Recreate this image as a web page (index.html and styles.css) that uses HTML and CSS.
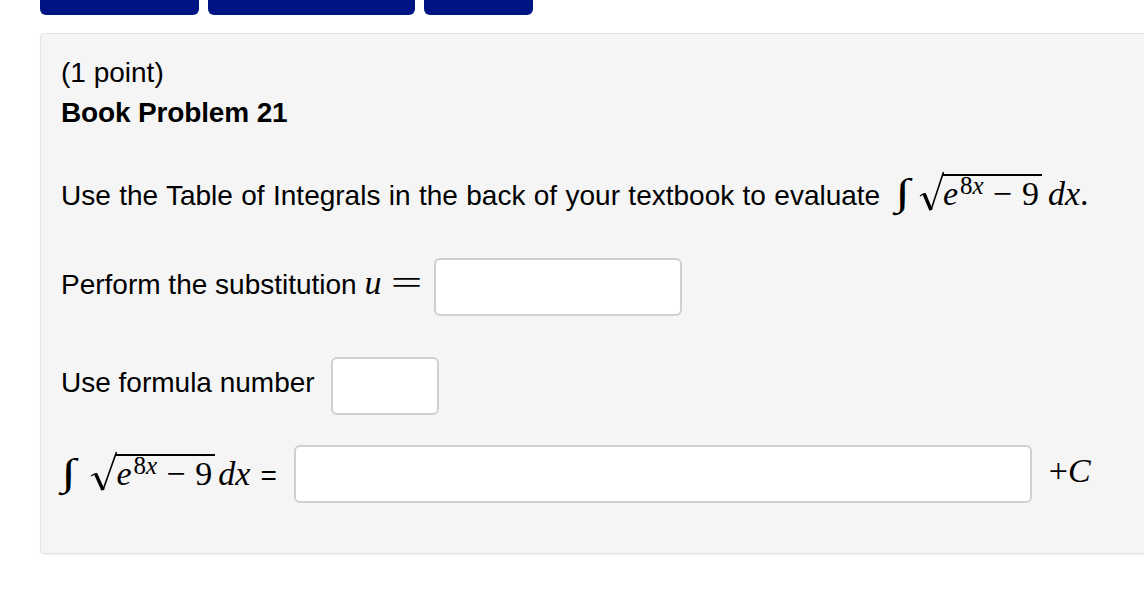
FILE: index.html
```html
<!DOCTYPE html>
<html lang="en">
<head>
  <meta charset="UTF-8" />
  <meta name="viewport" content="width=device-width, initial-scale=1" />
  <title>Book Problem 21</title>
  <link rel="stylesheet" href="styles.css">
</head>
<body>

  <div class="nav-buttons">
    <button class="nav-btn btn-a"></button>
    <button class="nav-btn btn-b"></button>
    <button class="nav-btn btn-c"></button>
  </div>

  <div class="problem">
    <div class="points">(1 point)</div>
    <div class="title">Book Problem 21</div>

    <p class="statement">Use the Table of Integrals in the back of your textbook to evaluate <span class="math"><span class="int">&int;</span><span class="sqrt"><svg class="rad" width="25" height="41" viewBox="0 0 25 41"><path d="M1 25 L5 22.5" stroke="#000" stroke-width="1.4" fill="none"/><path d="M5 22.5 L12 39" stroke="#000" stroke-width="3.4" fill="none"/><path d="M12 39 L24.5 1" stroke="#000" stroke-width="1.6" fill="none"/></svg><span class="radicand"><i>e</i><sup>8<i>x</i></sup><span class="minus">&minus;</span>9</span></span><span class="dx"><i>dx</i></span>.</span></p>

    <div class="row row-sub">
      <span class="label">Perform the substitution <span class="math"><i>u</i><span class="eq">=</span></span></span>
      <input type="text" class="answer ans-u" />
    </div>

    <div class="row row-formula">
      <span class="label">Use formula number</span>
      <input type="text" class="answer ans-num" />
    </div>

    <div class="row row-result">
      <span class="label"><span class="math"><span class="int first">&int;</span><span class="sqrt"><svg class="rad" width="27" height="41" viewBox="0 0 27 41"><path d="M1 25 L5.5 22.5" stroke="#000" stroke-width="1.4" fill="none"/><path d="M5.5 22.5 L13 39" stroke="#000" stroke-width="3.4" fill="none"/><path d="M13 39 L26.5 1" stroke="#000" stroke-width="1.6" fill="none"/></svg><span class="radicand"><i>e</i><sup>8<i>x</i></sup><span class="minus">&minus;</span>9</span></span><span class="dx short"><i>dx</i></span></span><span class="plain-eq">=</span></span>
      <input type="text" class="answer ans-int" />
      <span class="label math plus-c">+<i>C</i></span>
    </div>
  </div>

</body>
</html>
```

FILE: styles.css
```css
/* Reset */
* {
  box-sizing: border-box;
  margin: 0; padding: 0;
}

html, body {
  overflow: hidden;
}

body {
  width: 1144px;
  height: 590px;
  background: #fff;
  color: #000;
  font-family: "Liberation Sans", Arial, sans-serif;
  font-size: 28px;
}

/* Botones de arriba */
.nav-buttons {
  display: flex;
  gap: 9px;
  margin-left: 40px;
  height: 15px;
}

.nav-btn {
  height: 15px;
  border: none;
  background: #001483;
  border-radius: 0 0 6px 6px;
}

.btn-a { width: 159px; }
.btn-b { width: 207px; }
.btn-c { width: 109px; }

/* Panel del problema */
.problem {
  margin: 18px 0 0 40px;
  width: 1130px;
  background: #f5f5f5;
  border: 1px solid #e3e3e3;
  border-radius: 4px;
  box-shadow: 0 1px 2px rgba(0,0,0,0.05);
  padding: 19px 20px 50px 20px;
}

.points,
.title {
  line-height: 40px;
}

.title {
  font-weight: bold;
  letter-spacing: -0.15px;
}

.statement {
  margin-top: 38px;
  height: 40px;
  line-height: 40px;
  word-spacing: 0.6px;
  white-space: nowrap;
}

/* Matematicas */
.math {
  font-family: "Liberation Serif", "Times New Roman", serif;
  font-size: 34px;
  line-height: 1;
  white-space: nowrap;
  word-spacing: 0;
}

.math i {
  font-style: italic;
}

.int {
  display: inline-block;
  font-style: italic;
  font-size: 38px;
  transform: scaleX(1.4);
  margin: 0 12px 0 8px;
}

.int.first {
  margin: 0 17px 0 2px;
}

.sqrt {
  display: inline-block;
  white-space: nowrap;
}

.rad {
  display: inline-block;
  vertical-align: -7px;
  margin-right: -1px;
}

.radicand {
  display: inline-block;
  border-top: 2px solid #000;
  padding: 3px 3px 0 0;
  line-height: 30px;
}

.radicand sup {
  font-size: 25px;
  vertical-align: 11px;
  line-height: 0;
  margin-left: 2px;
}

.minus {
  margin: 0 10px 0 9px;
}

.dx {
  margin-left: 6px;
}

.dx.short {
  margin-left: 3px;
}

.eq {
  display: inline-block;
  transform: scaleX(1.65);
  margin-left: 16px;
}

/* Filas con respuestas */
.row {
  display: flex;
  align-items: center;
}

.label {
  margin-bottom: 6px;
  white-space: nowrap;
}

.row-sub .label {
  margin-bottom: 8px;
}

.row-sub { margin-top: 47px; }
.row-formula { margin-top: 41px; }
.row-result { margin-top: 30px; }

.answer {
  height: 58px;
  background: #fff;
  border: 2px solid #d0d0d0;
  border-radius: 6px;
  font-size: 24px;
}

.ans-u { width: 248px; margin-left: 17px; }
.ans-num { width: 108px; margin-left: 16px; }
.ans-int { width: 738px; margin-left: 17px; }

.plain-eq {
  font-size: 28px;
  margin-left: 10px;
}

.plus-c {
  margin-left: 17px;
}
```
